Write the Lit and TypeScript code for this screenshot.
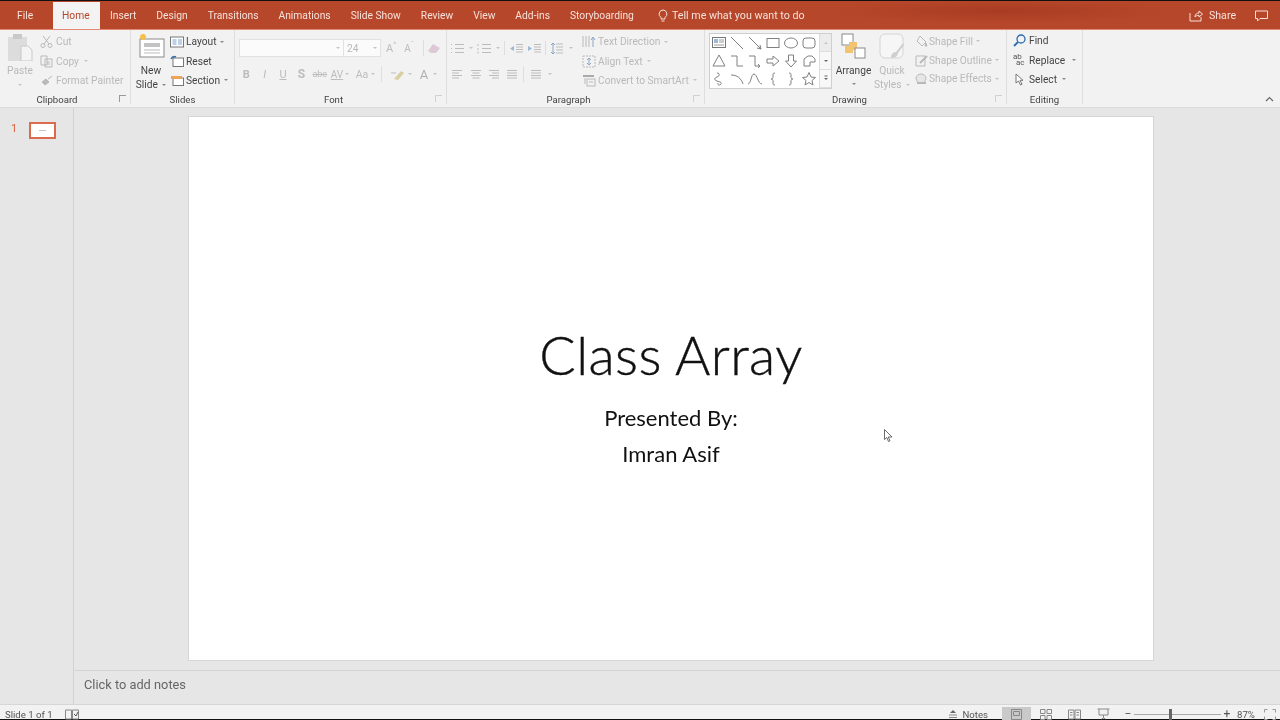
import { LitElement, css, html, svg } from "lit";
import { customElement } from "lit/decorators.js";

const TABS = ["Insert", "Design", "Transitions", "Animations", "Slide Show", "Review", "View", "Add-ins", "Storyboarding"];

const icon = (w: number, h: number, body: unknown) =>
	html`<svg class="ico" width=${w} height=${h} viewBox=${`0 0 ${w} ${h}`} fill="none" stroke="currentColor" stroke-width="1">${body}</svg>`;

const GALLERY = [
	svg`<rect x="2.5" y="3.5" width="13" height="10" stroke="#777"></rect><rect x="4" y="5" width="4" height="4" fill="#9db7d5" stroke="none"></rect><path d="M9 6h5M9 8h5M4 11h10" stroke="#999"></path>`,
	svg`<path d="M3 3l12 12"></path>`,
	svg`<path d="M3 3l12 12M15 15l-4-1M15 15l-1-4"></path>`,
	svg`<rect x="3" y="4.5" width="12" height="9"></rect>`,
	svg`<ellipse cx="9" cy="9" rx="6.5" ry="5"></ellipse>`,
	svg`<rect x="3" y="4" width="12" height="10" rx="3"></rect>`,
	svg`<path d="M9 3l6 11H3z"></path>`,
	svg`<path d="M3 4h6v10h6"></path>`,
	svg`<path d="M3 4h6v10h5M12 12l2 2-2 2"></path>`,
	svg`<path d="M3 7h6V4l6 5-6 5v-3H3z"></path>`,
	svg`<path d="M6.500 3h5v6h3L9 15 3.500 9h3z"></path>`,
	svg`<path d="M4 14V7l4-3h4l3 3v3h-5v4z"></path>`,
	svg`<path d="M7 3c3 0 3 3 0 4s-3 3 0 4 5 1 4 3-4 1-3-1"></path>`,
	svg`<path d="M3 5c6 0 10 3 12 9"></path>`,
	svg`<path d="M2 14c3 0 3-10 6-10s4 10 8 10"></path>`,
	svg`<path d="M11 3c-2 0-2 1-2 2v2.500c0 1-1 1.500-2 1.500 1 0 2 .5 2 1.500V13c0 1 0 2 2 2"></path>`,
	svg`<path d="M7 3c2 0 2 1 2 2v2.500c0 1 1 1.500 2 1.500-1 0-2 .5-2 1.500V13c0 1 0 2-2 2"></path>`,
	svg`<path d="M9 2.500l2 4.500 4.500.5-3.500 3 1 4.500-4-2.500-4 2.500 1-4.500-3.500-3 4.500-.5z"></path>`
];

function caret() {
	return html`<span class="caret"></span>`;
}

@customElement("app-root")
export class AppRoot extends LitElement {
	private titleBar() {
		return html`<header class="titlebar">
			<div class="tab first">File</div>
			<div class="tab active">Home</div>
			${TABS.map((t) => html`<div class="tab">${t}</div>`)}
			<div class="tell">
				${icon(10, 14, svg`<path d="M5 1a4 4 0 0 0-2 7.400V10h4V8.400A4 4 0 0 0 5 1zM3.500 12h3"></path>`)}
				<span>Tell me what you want to do</span>
			</div>
			<div class="spacer"></div>
			<div class="share">
				${icon(14, 13, svg`<path d="M1 4v8h11V8M6 8c0-3 2-4 4-4V2l3.500 3L10 8V6.300C8 6.300 7 7 6 8z"></path>`)}
				<span>Share</span>
			</div>
			<div class="comment">${icon(13, 12, svg`<path d="M.5 1h12v7.500H5L2.500 11V8.500h-2z"></path>`)}</div>
		</header>`;
	}

	private clipboard() {
		return html`<section class="group g-clip">
			<div class="body">
				<div class="big paste">
					${icon(25, 28, svg`<rect x="0" y="4" width="19" height="24" fill="#dcdcdc" stroke="none"></rect><rect x="5" y="1" width="9" height="5" fill="#c9c9c9" stroke="none"></rect><path d="M13 13h7l4 4v11H13z" fill="#f4f4f4" stroke="#c8c8c8"></path>`)}
					<span class="faded biglabel">Paste</span>
					<span class="caret"></span>
				</div>
				<div class="stack">
					<div class="row faded">
						${icon(13, 13, svg`<path d="M3 1l6 8M10 1L4 9"></path><circle cx="3" cy="10.500" r="2"></circle><circle cx="10" cy="10.500" r="2"></circle>`)}
						<span>Cut</span>
					</div>
					<div class="row faded">
						${icon(13, 13, svg`<path d="M1 1h6v9H1zM5 4h7v8H5z"></path><path d="M7 7h3M7 9h3"></path>`)}
						<span>Copy</span>${caret()}
					</div>
					<div class="row faded">
						${icon(13, 13, svg`<path d="M2 8l4-3 3 3-4 3z" fill="currentColor"></path><path d="M8 5l4-3"></path>`)}
						<span>Format Painter</span>
					</div>
				</div>
			</div>
			<div class="label dark">Clipboard<span class="launcher"></span></div>
		</section>`;
	}

	private slides() {
		return html`<section class="group g-slides">
			<div class="body">
				<div class="big newslide">
					${icon(27, 25, svg`<rect x="2" y="6" width="24" height="18" fill="#fff" stroke="#8a8a8a"></rect><rect x="6" y="10" width="16" height="4" fill="#c4c4c4" stroke="none"></rect><path d="M6 17h16M6 20h16" stroke="#bbb"></path><circle cx="5" cy="4" r="3" fill="#f3c14b" stroke="none"></circle>`)}
					<span class="biglabel dark">New</span>
					<span class="biglabel dark tight">Slide ${caret()}</span>
				</div>
				<div class="stack">
					<div class="row">
						${icon(14, 12, svg`<rect x=".5" y="1" width="13" height="10" stroke="#777" fill="#fff"></rect><rect x="2.500" y="3" width="4" height="6" fill="#bcd0e6" stroke="none"></rect><rect x="8" y="3" width="4" height="6" fill="#bcd0e6" stroke="none"></rect>`)}
						<span>Layout</span>${caret()}
					</div>
					<div class="row">
						${icon(14, 12, svg`<rect x="3" y="3" width="10.500" height="8.500" stroke="#777" fill="#fff"></rect><path d="M1 4a4 4 0 0 1 5-2" stroke="#3a6ea5" stroke-width="1.500"></path>`)}
						<span>Reset</span>
					</div>
					<div class="row">
						${icon(14, 12, svg`<rect x="3" y="4" width="10.500" height="7.500" stroke="#777" fill="#fff"></rect><rect x="1" y="2" width="11" height="3" fill="#eda45a" stroke="none"></rect>`)}
						<span>Section</span>${caret()}
					</div>
				</div>
			</div>
			<div class="label dark">Slides</div>
		</section>`;
	}

	private font() {
		return html`<section class="group g-font">
			<div class="rows">
				<div class="irow r1">
					<div class="fontbox"><span class="caret"></span></div>
					<div class="sizebox"><span>24</span><span class="caret"></span></div>
					<span class="cell grow-a">A<sup>^</sup></span>
					<span class="cell grow-a small">A<sup>ˇ</sup></span>
					<span class="vr"></span>
					<span class="cell eraser">${icon(14, 12, svg`<path d="M1 9l5-7 7 4-4 5H4z" fill="#dcc9d5" stroke="none"></path>`)}</span>
				</div>
				<div class="irow r2">
					<span class="cell fmt bold">B</span>
					<span class="cell fmt ital">I</span>
					<span class="cell fmt und">U</span>
					<span class="cell fmt shadow">S</span>
					<span class="cell fmt strike">abc</span>
					<span class="cell fmt av">AV</span>${caret()}
					<span class="cell fmt aa">Aa</span>${caret()}
					<span class="vr v2"></span>
					<span class="cell fmt hl">${icon(16, 13, svg`<path d="M4 11l7-8 3 2-6 7z" fill="#d8cfa0" stroke="none"></path><path d="M1 5h5" stroke="#bbb"></path>`)}</span>${caret()}
					<span class="cell fmt bigA">A</span>${caret()}
				</div>
			</div>
			<div class="label dark">Font<span class="launcher off"></span></div>
		</section>`;
	}

	private paragraph() {
		const alignIco = (d: string) => icon(12, 10, svg`<path d=${d}></path>`);
		return html`<section class="group g-para">
			<div class="body">
				<div class="rows prows">
					<div class="irow r1">
						<span class="cell p">${icon(15, 11, svg`<path d="M1 1.500h1M1 5.500h1M1 9.500h1M5 1.500h9M5 5.500h9M5 9.500h9"></path>`)}</span>${caret()}
						<span class="cell p">${icon(15, 11, svg`<path d="M1 1v2M1 5v2M1 8.500v2M5 1.500h9M5 5.500h9M5 9.500h9"></path>`)}</span>${caret()}
						<span class="vr v3"></span>
						<span class="cell p">${icon(14, 11, svg`<path d="M7 1.500h7M7 4h7M7 6.500h7M7 9h7"></path><path d="M5 3L1 5.500 5 8z" fill="#9db7d5" stroke="none"></path>`)}</span>
						<span class="cell p">${icon(14, 11, svg`<path d="M7 1.500h7M7 4h7M7 6.500h7M7 9h7"></path><path d="M1 3l4 2.500L1 8z" fill="#9db7d5" stroke="none"></path>`)}</span>
						<span class="vr v3"></span>
						<span class="cell p">${icon(14, 13, svg`<path d="M6 2h7M6 5h7M6 8h7M6 11h7"></path><path d="M3 1v11M1 3l2-2 2 2M1 10l2 2 2-2" stroke="#8ba6c4"></path>`)}</span>${caret()}
					</div>
					<div class="irow r2 r2p">
						<span class="cell a">${alignIco("M1 1.500h10M1 4h7M1 6.500h10M1 9h7")}</span>
						<span class="cell a">${alignIco("M1 1.500h10M2.500 4h7M1 6.500h10M2.500 9h7")}</span>
						<span class="cell a">${alignIco("M1 1.500h10M4 4h7M1 6.500h10M4 9h7")}</span>
						<span class="cell a">${alignIco("M1 1.500h10M1 4h10M1 6.500h10M1 9h10")}</span>
						<span class="vr v4"></span>
						<span class="cell a cols">${alignIco("M1 1.500h10M1 4h10M1 6.500h10M1 9h10")}</span>${caret()}
					</div>
				</div>
				<div class="stack pstack">
					<div class="row faded">
						${icon(14, 13, svg`<path d="M1 1v11M4 1v11M7 1v11"></path><path d="M11 12V3M9 5l2-3 2 3" stroke="#8ba6c4"></path>`)}
						<span>Text Direction</span>${caret()}
					</div>
					<div class="row faded">
						${icon(14, 13, svg`<path d="M1 1h12v11H1z" stroke-dasharray="2 1"></path><path d="M7 3v7M5 5l2-2 2 2M5 8l2 2 2-2" stroke="#8ba6c4"></path>`)}
						<span>Align Text</span>${caret()}
					</div>
					<div class="row faded">
						${icon(14, 13, svg`<path d="M1 2h11" stroke="#aaa" stroke-width="2"></path><rect x="5" y="5" width="8" height="7"></rect><path d="M3 4v6M7 8h4"></path>`)}
						<span>Convert to SmartArt</span>${caret()}
					</div>
				</div>
			</div>
			<div class="label dark">Paragraph<span class="launcher off"></span></div>
		</section>`;
	}

	private drawing() {
		return html`<section class="group g-draw">
			<div class="body">
				<div class="gallery">
					<div class="shapes">
						${GALLERY.map((s) => html`<span class="shape">${icon(18, 18, s)}</span>`)}
					</div>
					<div class="scroller">
						<span class="sbtn off"><i class="up"></i></span>
						<span class="sbtn"><i></i></span>
						<span class="sbtn more"><i></i></span>
					</div>
				</div>
				<div class="big arrange">
					${icon(25, 26, svg`<rect x="1" y="1" width="11" height="11" fill="#fff" stroke="#8a8a8a"></rect><rect x="8" y="9" width="8" height="8" fill="#f2c46f" stroke="none"></rect><rect x="4" y="13" width="8" height="7" fill="#f2c46f" stroke="none"></rect><rect x="14" y="15" width="10" height="10" fill="#fff" stroke="#8a8a8a"></rect>`)}
					<span class="biglabel dark">Arrange</span>
					<span class="caret"></span>
				</div>
				<div class="big quick">
					${icon(26, 27, svg`<rect x="1" y="1" width="23" height="24" rx="5" fill="#f6f6f6" stroke="#d4d4d4"></rect><path d="M12 25c0-5 3-6 5-6l7-9 1 2-6 8c0 3-3 5-7 5z" fill="#cfcfcf" stroke="none"></path>`)}
					<span class="faded biglabel">Quick</span>
					<span class="faded biglabel tight">Styles ${caret()}</span>
				</div>
				<div class="stack dstack">
					<div class="row faded">
						${icon(13, 13, svg`<path d="M5 1l6 6-4 4-5-5z"></path><path d="M11 8l1 3h-2z" fill="currentColor"></path>`)}
						<span>Shape Fill</span>${caret()}
					</div>
					<div class="row faded">
						${icon(13, 13, svg`<path d="M1 2h9v10H1z"></path><path d="M5 9l7-7" stroke-width="2"></path>`)}
						<span>Shape Outline</span>${caret()}
					</div>
					<div class="row faded">
						${icon(13, 13, svg`<ellipse cx="6" cy="6.500" rx="5" ry="4.500" fill="#e6e6e6"></ellipse><path d="M2 11h9" stroke-width="2"></path>`)}
						<span>Shape Effects</span>${caret()}
					</div>
				</div>
			</div>
			<div class="label dark">Drawing<span class="launcher off"></span></div>
		</section>`;
	}

	private editing() {
		return html`<section class="group g-edit">
			<div class="body">
				<div class="stack estack">
					<div class="row">
						${icon(13, 13, svg`<circle cx="8" cy="5" r="4" stroke="#2b6cb0" stroke-width="1.300"></circle><path d="M5 8l-4 4" stroke="#2b6cb0" stroke-width="1.800"></path>`)}
						<span>Find</span>
					</div>
					<div class="row">
						<span class="abac"><span>ab</span><span>ac</span></span>
						<span>Replace</span><span class="caret wide"></span>
					</div>
					<div class="row">
						${icon(13, 13, svg`<path d="M3 1v9l2.500-2 2 4 1.500-.7-2-4H10z" stroke="#777" fill="#fff"></path>`)}
						<span>Select</span>${caret()}
					</div>
				</div>
			</div>
			<div class="label dark">Editing</div>
		</section>`;
	}

	private statusBar() {
		return html`<footer class="status">
			<span class="count">Slide 1 of 1</span>
			<span class="spell">${icon(14, 11, svg`<path d="M.5 1h6v9h-6zM7.500 1h6v9h-6z"></path><path d="M9 5l2 2 2-4" stroke="#555"></path>`)}</span>
			<div class="spacer"></div>
			<span class="notes">${icon(10, 10, svg`<path d="M5 1L2 4h6z" fill="#666" stroke="none"></path><path d="M1 6h8M1 8.500h8"></path>`)}Notes</span>
			<span class="view on">${icon(13, 11, svg`<path d="M1.500.5h10v10h-10zM3.500 2.500h6v4h-6z"></path>`)}</span>
			<span class="view">${icon(12, 11, svg`<path d="M.5.500h4.500v4H.5zM7 .5h4.500v4H7zM.5 6.500h4.500v4H.5zM7 6.500h4.500v4H7z"></path>`)}</span>
			<span class="view">${icon(13, 11, svg`<path d="M.5 1h5.500v9H.5zM7 1h5.500v9H7zM2 3.500h2.500M2 6h2.500M8.500 3.500H11M8.500 6H11"></path>`)}</span>
			<span class="view">${icon(13, 12, svg`<path d="M.5 1h12M2 1v6h9V1M6.500 7v3M4.500 11l2-1 2 1"></path>`)}</span>
			<span class="zoomctl">
				<span class="sign">−</span>
				<span class="slider"><i></i></span>
				<span class="sign">+</span>
			</span>
			<span class="pct">87%</span>
			<span class="fit">${icon(12, 11, svg`<path d="M.5 3.500v-3h3M8.500.5h3v3M11.500 7.500v3h-3M3.500 10.500h-3v-3"></path>`)}</span>
		</footer>`;
	}

	render() {
		return html`
			${this.titleBar()}
			<div class="ribbon">
				${this.clipboard()}${this.slides()}${this.font()}${this.paragraph()}${this.drawing()}${this.editing()}
				<div class="collapse">${icon(9, 6, svg`<path d="M1 5l3.500-3.500L8 5" stroke-width="1.200"></path>`)}</div>
			</div>
			<main class="work">
				<aside class="thumbs">
					<span class="num">1</span>
					<div class="thumb"><i></i></div>
				</aside>
				<div class="editor">
					<div class="stage">
						<article class="slide">
							<h1>Class Array</h1>
							<p>Presented By:</p>
							<p>Imran Asif</p>
						</article>
					</div>
					<div class="notesbar">Click to add notes</div>
				</div>
			</main>
			${this.statusBar()}
			<svg class="pointer" width="9" height="13" viewBox="0 0 9 13"><path d="M.5.500v10l2.300-2 1.700 4 1.500-.7-1.700-3.800H8z" fill="#fff" stroke="#444" stroke-width=".8"></path></svg>
		`;
	}

	static styles = css`
		:host {
			display: flex;
			flex-direction: column;
			position: relative;
			width: 1280px;
			height: 720px;
			overflow: hidden;
			background: #e6e6e6;
			font-family: Roboto, "Liberation Sans", sans-serif;
			font-size: 10.2px;
			color: #444;
			filter: blur(0.3px);
		}
		.ico { display: block; flex: none; }
		.spacer { flex: 1; }

		.titlebar {
			display: flex;
			flex: none;
			align-items: flex-end;
			height: 27px;
			padding: 1px 0 0 7px;
			border-top: 1px solid #111;
			border-bottom: 1px solid #e28a76;
			background:
				radial-gradient(ellipse 170px 12px at 1000px 10px, #a83c22, transparent),
				#b7472a;
			color: #f6e0da;
			box-sizing: content-box;
			font-size: 10.28px;
		}
		.tab {
			height: 27px;
			line-height: 27px;
			padding: 0 10px;
			white-space: nowrap;
		}
		.tab.first { width: 16px; margin-right: 10px; }
		.tab.active {
			width: 28px;
			padding: 0 10px 0 9px;
			background: #f3f3f3;
			color: #b7472a;
		}
		.tell {
			display: flex;
			align-items: center;
			gap: 4px;
			height: 27px;
			margin-left: 14px;
			font-size: 10.7px;
			white-space: nowrap;
		}
		.share {
			display: flex;
			align-items: center;
			gap: 6px;
			height: 27px;
			font-size: 10.6px;
		}
		.comment {
			display: flex;
			align-items: center;
			height: 27px;
			padding: 0 12px 0 19px;
		}

		.ribbon {
			position: relative;
			display: flex;
			flex: none;
			height: 77px;
			background: #f2f2f2;
			box-shadow: 0 1px 0 #dcdcdc;
		}
		.group {
			position: relative;
			display: flex;
			flex-direction: column;
			flex: none;
			box-sizing: border-box;
			height: 74px;
			border-right: 1px solid #dedede;
		}
		.g-clip { width: 131px; }
		.g-slides { width: 104px; }
		.g-font { width: 212px; }
		.g-para { width: 258px; }
		.g-draw { width: 302px; }
		.g-edit { width: 76px; }
		.body { display: flex; flex: none; height: 62px; }
		.rows { flex: none; height: 62px; }
		.label {
			position: relative;
			flex: none;
			height: 12px;
			line-height: 16px;
			text-align: center;
			font-size: 9.6px;
		}
		.g-clip .label { padding-right: 16px; }
		.g-font .label { padding-right: 14px; }
		.g-para .label { padding-right: 14px; }
		.g-draw .label { padding-right: 12px; }
		.dark { color: #444; }
		.faded { color: #b9b9b9; }
		.launcher {
			position: absolute;
			right: 4px;
			top: 3px;
			width: 6px;
			height: 6px;
			border-left: 1px solid #999;
			border-top: 1px solid #999;
		}
		.launcher.off { border-color: #d2d2d2; }

		.caret {
			display: inline-block;
			flex: none;
			width: 0;
			height: 0;
			margin-left: 2px;
			vertical-align: middle;
			border-left: 2px solid transparent;
			border-right: 2px solid transparent;
			border-top: 2px solid #888;
		}
		.faded .caret, .g-font .caret, .g-para .caret, .paste .caret { border-top-color: #c4c4c4; }
		.caret.wide { margin-left: 4px; }

		.stack { display: flex; flex-direction: column; padding-top: 2px; }
		.row {
			display: flex;
			align-items: center;
			gap: 3px;
			height: 19.4px;
			white-space: nowrap;
		}
		.big {
			display: flex;
			flex-direction: column;
			align-items: center;
			flex: none;
			padding-top: 3px;
		}
		.biglabel { line-height: 14px; white-space: nowrap; }
		.tight { display: block; }

		.paste { width: 32px; margin-left: 4px; }
		.paste .biglabel { margin-top: 3px; }
		.paste .caret { margin: 6px 0 0; }
		.g-clip .stack { margin-left: 4px; }

		.newslide { width: 36px; margin-left: 2px; }
		.newslide .ico { margin-bottom: 6px; }
		.g-slides .stack { margin-left: 1px; }
		.g-slides .row { gap: 2px; }

		.irow { display: flex; align-items: center; }
		.r1 { height: 18px; padding: 9px 0 0 4px; }
		.r2 { height: 18px; margin-top: 8px; padding-left: 2px; }
		.fontbox, .sizebox {
			display: flex;
			align-items: center;
			justify-content: flex-end;
			height: 18px;
			box-sizing: border-box;
			background: #fbfbfb;
			border: 1px solid #e2e2e2;
		}
		.fontbox { width: 105px; padding-right: 3px; }
		.sizebox {
			width: 38px;
			margin-left: -1px;
			justify-content: space-between;
			padding: 0 3px;
			color: #b9b9b9;
		}
		.cell {
			display: flex;
			align-items: center;
			justify-content: center;
			flex: none;
			color: #bcbcbc;
		}
		.grow-a { width: 18px; font-size: 11px; }
		.grow-a:first-of-type { margin-left: 1px; }
		.grow-a sup { font-size: 7px; line-height: 1; margin-top: -5px; }
		.grow-a.small { font-size: 10px; }
		.vr {
			flex: none;
			width: 1px;
			height: 16px;
			margin: 0 5px;
			background: #dedede;
		}
		.eraser { width: 10px; }
		.fmt { width: 18.4px; height: 14px; font-size: 11px; }
		.bold { font-weight: 700; }
		.ital { font-style: italic; }
		.und { text-decoration: underline; }
		.shadow { font-weight: 700; font-size: 12px; }
		.strike { text-decoration: line-through; font-size: 9px; }
		.av { font-size: 10px; text-decoration: underline; width: 16px; }
		.aa { margin-left: 4px; width: 18px; font-size: 10.5px; }
		.hl { width: 20px; margin-left: 4px; }
		.bigA { width: 18px; margin-left: 3px; font-size: 13px; color: #b0b0b0; }
		.v2 { margin: 0 2px 0 6px; }
		.g-font .caret { margin-left: 0; }

		.prows { width: 132px; }
		.prows .r1 { padding-left: 1px; }
		.p { width: 18px; }
		.prows .caret { margin-left: 3px; margin-right: 2px; }
		.v3 { margin: 0 2px; height: 14px; }
		.r2p { margin-top: 8px; padding-left: 1px; }
		.a { width: 18.4px; }
		.v4 { margin: 0 3px 0 1px; }
		.pstack { margin-left: 3px; }
		.pstack .row { gap: 2px; }

		.gallery {
			display: flex;
			flex: none;
			box-sizing: border-box;
			width: 123px;
			height: 56px;
			margin: 3px 0 0 4px;
			border: 1px solid #cfcfcf;
		}
		.shapes {
			display: grid;
			grid-template-columns: repeat(6, 18px);
			grid-auto-rows: 18px;
			width: 110px;
			background: #fff;
			color: #808080;
			border-right: 1px solid #dcdcdc;
			box-sizing: border-box;
		}
		.scroller { display: flex; flex-direction: column; flex: 1; }
		.sbtn {
			display: flex;
			flex: 1;
			align-items: center;
			justify-content: center;
			background: #f8f8f8;
			border-bottom: 1px solid #dedede;
		}
		.sbtn.off { background: #ececec; }
		.sbtn i {
			width: 0;
			height: 0;
			border-left: 2px solid transparent;
			border-right: 2px solid transparent;
			border-top: 2px solid #666;
		}
		.sbtn i.up { border-top: none; border-bottom: 2px solid #c4c4c4; }
		.sbtn.more i { box-shadow: 0 -3px 0 -0.5px #666; }
		.arrange { width: 45px; margin-left: -1px; }
		.arrange .ico { margin-bottom: 5px; }
		.arrange .caret { margin: 5px 0 0; }
		.quick { width: 38px; margin-left: -3px; }
		.quick .ico { margin-bottom: 4px; }
		.dstack { margin-left: 4px; }
		.dstack .row { gap: 1px; height: 18.8px; }

		.estack { flex: 1; margin-left: 6px; padding-top: 1px; }
		.abac {
			display: flex;
			flex-direction: column;
			width: 13px;
			font-size: 8px;
			line-height: 6.5px;
			color: #555;
		}
		.abac span:last-child { margin-left: 3px; }
		.collapse { position: absolute; right: 6px; top: 66px; color: #666; }

		.work { display: flex; flex: 1; min-height: 0; }
		.thumbs {
			display: flex;
			flex: none;
			align-items: flex-start;
			width: 74px;
			box-sizing: border-box;
			padding: 15px 0 0 11px;
			border-right: 1px solid #d2d2d2;
			color: #d9603f;
			font-size: 11px;
		}
		.num { width: 18px; line-height: 12px; margin-top: 1px; }
		.thumb {
			display: flex;
			align-items: center;
			justify-content: center;
			width: 27px;
			height: 17px;
			box-sizing: border-box;
			border: 2px solid #dc6a4c;
			background: #fff;
		}
		.thumb i { width: 7px; height: 1px; background: #c4c4c4; }
		.editor { display: flex; flex-direction: column; flex: 1; min-width: 0; }
		.stage {
			display: flex;
			flex: 1;
			justify-content: center;
			padding: 10px 12px 0 0;
			min-height: 0;
		}
		.slide {
			display: flex;
			flex-direction: column;
			align-items: center;
			width: 964px;
			height: 543px;
			box-sizing: border-box;
			padding-top: 205px;
			background: #fff;
			box-shadow: 0 0 0 1px #d6d6d6;
			color: #111;
			font-family: Lato, "Open Sans", sans-serif;
		}
		.slide h1 {
			margin: 0 0 12px;
			font-size: 54px;
			font-weight: 300;
			line-height: 66px;
			letter-spacing: 0.4px;
			-webkit-text-stroke: 0.4px #111;
		}
		.slide p {
			margin: 0;
			font-size: 22px;
			line-height: 36px;
		}
		.notesbar {
			flex: none;
			height: 33px;
			line-height: 28px;
			margin-left: 1px;
			padding-left: 9px;
			border-top: 1px solid #d2d2d2;
			color: #666;
			font-size: 12.8px;
		}

		.status {
			display: flex;
			flex: none;
			align-items: center;
			height: 14px;
			padding: 0 0 0 5px;
			background: #f2f2f2;
			border-top: 1px solid #d6d6d6;
			border-bottom: 1px solid #111;
			box-sizing: content-box;
			color: #555;
			font-size: 9.6px;
		}
		.status > * { position: relative; top: 2px; }
		.count { width: 60px; white-space: nowrap; }
		.spell { color: #888; }
		.notes {
			display: flex;
			align-items: center;
			gap: 5px;
			margin-right: 14px;
		}
		.notes .ico { color: #888; }
		.view {
			display: flex;
			align-items: center;
			justify-content: center;
			width: 29px;
			height: 14px;
			color: #888;
		}
		.view.on { background: #c9c9c9; }
		.zoomctl { display: flex; align-items: center; margin-left: 4px; }
		.sign { width: 12px; text-align: center; font-size: 12px; line-height: 10px; color: #555; }
		.slider {
			position: relative;
			width: 87px;
			height: 1px;
			background: #aaa;
		}
		.slider i {
			position: absolute;
			left: 35px;
			top: -5px;
			width: 3px;
			height: 11px;
			background: #666;
		}
		.pct { margin-left: 4px; width: 27px; }
		.fit { width: 16px; color: #999; }

		.pointer { position: absolute; left: 884px; top: 429px; }
	`;
}
